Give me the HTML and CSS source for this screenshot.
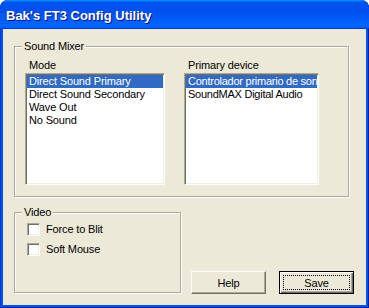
FILE: index.html
```html
<!DOCTYPE html>
<html lang="en">
<head>
<meta charset="UTF-8">
<title>Bak's FT3 Config Utility</title>
<link rel="stylesheet" href="styles.css">
</head>
<body>
<div class="window">
  <div class="titlebar">
    <span class="title">Bak's FT3 Config Utility</span>
  </div>
  <div class="client">
    <div class="group mixer">
      <span class="group-label">Sound Mixer</span>
      <div class="columns">
        <div class="col">
          <div class="field-label">Mode</div>
          <ul class="listbox mode-list">
            <li class="selected">Direct Sound Primary</li>
            <li>Direct Sound Secondary</li>
            <li>Wave Out</li>
            <li>No Sound</li>
          </ul>
        </div>
        <div class="col">
          <div class="field-label">Primary device</div>
          <ul class="listbox device-list">
            <li class="selected">Controlador primario de son</li>
            <li>SoundMAX Digital Audio</li>
          </ul>
        </div>
      </div>
    </div>

    <div class="bottom-row">
      <div class="group video">
        <span class="group-label">Video</span>
        <label class="check"><span class="box"></span>Force to Blit</label>
        <label class="check"><span class="box"></span>Soft Mouse</label>
      </div>
      <div class="buttons">
        <button class="btn">Help</button>
        <button class="btn default"><span class="focus">Save</span></button>
      </div>
    </div>
  </div>
</div>
</body>
</html>
```

FILE: styles.css
```css
/* XP style dialog */
body {
  margin: 0;
  background: #fff;
  font-family: 'Liberation Sans', Arial, sans-serif;
  font-size: 11px;
  letter-spacing: -0.15px;
  color: #000;
}

.window {
  width: 369px;
  height: 308px;
  display: flex;
  flex-direction: column;
  border-radius: 8px 8px 0 0;
  background: #0055ea;
  box-shadow: inset 1px 0 #0831d9, inset -1px 0 #001ea0, inset 0 -1px #001ea0;
  overflow: hidden;
}

.titlebar {
  height: 29px;
  flex: none;
  display: flex;
  align-items: center;
  padding-left: 6px;
  border-radius: 8px 8px 0 0;
  background: linear-gradient(#0997ff 0, #0053ee 8%, #0050ee 40%, #06f 88%, #06f 93%, #005bff 95%, #003dd7 96%, #003dd7);
}

.title {
  color: #fff;
  font-weight: bold;
  font-size: 13px;
  letter-spacing: 0;
  text-shadow: 1px 1px #0f1089;
  padding-top: 1px;
}

.client {
  flex: 1;
  margin: 0 3px 3px 3px;
  background: #ece9d8;
  padding: 17px 0 0 11px;
}

/* group boxes (etched frame) */
.group {
  position: relative;
  box-sizing: border-box;
  border: 1px solid #aca899;
  box-shadow: inset 1px 1px #fff, 1px 1px #fff;
}

.group-label {
  position: absolute;
  top: -7px;
  left: 7px;
  padding: 0 2px;
  line-height: 13px;
  background: #ece9d8;
}

.mixer {
  width: 335px;
  height: 151px;
  padding: 12px 0 0 10px;
}

.columns {
  display: flex;
  gap: 19px;
}

.field-label {
  height: 13px;
  line-height: 13px;
  margin-bottom: 1px;
  padding-left: 4px;
}

.listbox {
  list-style: none;
  margin: 0;
  padding: 1px 0 0 0;
  height: 112px;
  box-sizing: border-box;
  background: #fff;
  border-top: 1px solid #aca899;
  border-left: 1px solid #aca899;
  border-right: 1px solid #fff;
  border-bottom: 1px solid #fff;
  box-shadow: inset 1px 1px #716f64, inset -1px -1px #f1efe2;
  overflow: hidden;
}

.listbox li {
  height: 13px;
  line-height: 13px;
  margin: 0 1px;
  padding-left: 2px;
  white-space: nowrap;
  overflow: hidden;
}

.listbox li.selected {
  background: #316ac5;
  color: #fff;
}

.mode-list {
  width: 140px;
}

.device-list {
  width: 135px;
  letter-spacing: -0.25px;
}

.bottom-row {
  display: flex;
  align-items: flex-start;
  margin-top: 15px;
}

.video {
  width: 167px;
  height: 81px;
  padding: 10px 0 0 12px;
}

.check {
  display: flex;
  align-items: center;
  gap: 6px;
  height: 13px;
  margin-bottom: 7px;
  line-height: 13px;
}

.box {
  width: 13px;
  height: 13px;
  box-sizing: border-box;
  background: #fff;
  border-top: 1px solid #aca899;
  border-left: 1px solid #aca899;
  border-right: 1px solid #fff;
  border-bottom: 1px solid #fff;
  box-shadow: inset 1px 1px #716f64, inset -1px -1px #f1efe2;
}

.buttons {
  display: flex;
  gap: 13px;
  margin-left: 10px;
  margin-top: 59px;
}

.btn {
  width: 75px;
  height: 23px;
  box-sizing: border-box;
  padding: 0;
  font-family: inherit;
  font-size: 11px;
  letter-spacing: inherit;
  color: #000;
  background: #ece9d8;
  border-top: 1px solid #fff;
  border-left: 1px solid #fff;
  border-right: 1px solid #716f64;
  border-bottom: 1px solid #716f64;
  box-shadow: inset -1px -1px #aca899;
}

.btn.default {
  border: 1px solid #000;
  box-shadow: inset 1px 1px #fff, inset -1px -1px #716f64, inset -2px -2px #aca899;
  padding: 3px;
}

.focus {
  display: flex;
  align-items: center;
  justify-content: center;
  height: 100%;
  box-sizing: border-box;
  border: 1px dotted #000;
}
```
